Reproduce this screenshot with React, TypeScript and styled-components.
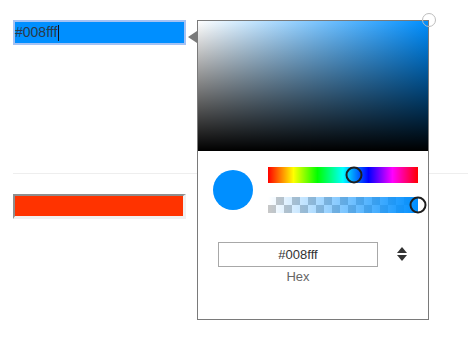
import React from "react";
import styled, { createGlobalStyle } from "styled-components";

const Global = createGlobalStyle`
  html, body { margin: 0; padding: 0; background: #fff; }
  body { font-family: "Liberation Sans", Arial, sans-serif; }
`;

const Page = styled.div`
  padding-top: 20px;
  width: 468px;
  height: 360px;
  box-sizing: border-box;
  overflow: hidden;
`;

const TopRow = styled.div`
  height: 153px;
  padding-left: 13px;
`;

const Anchor = styled.div`
  position: relative;
  width: 173px;
`;

const ColorField = styled.div<{ $bg: string; $focused?: boolean }>`
  box-sizing: border-box;
  width: 173px;
  height: 25px;
  background: ${(p) => p.$bg};
  border: 2px solid;
  border-color: ${(p) => (p.$focused ? "#a4c2f4" : "#8e8e8e #f0f0f0 #f0f0f0 #8e8e8e")};
  ${(p) => (p.$focused ? "" : "border-width: 2px 3px 3px 2px;")}
  font-size: 14px;
  line-height: 21px;
  color: #2a3a4a;
  padding-left: 0;
  display: flex;
  align-items: center;
`;

const Caret = styled.span`
  display: inline-block;
  width: 1px;
  height: 16px;
  background: #111;
  margin-left: 1px;
`;

const Divider = styled.div`
  margin-left: 13px;
  border-top: 1px solid #eeeeee;
`;

const BottomRow = styled.div`
  padding: 20px 0 0 13px;
`;

const Popover = styled.div`
  position: absolute;
  left: 184px;
  top: 0;
  width: 232px;
  height: 300px;
  box-sizing: border-box;
  border: 1px solid #7a7a7a;
  background: #fff;
`;

const Arrow = styled.div`
  position: absolute;
  left: -10px;
  top: 10px;
  width: 0;
  height: 0;
  border-top: 6px solid transparent;
  border-bottom: 6px solid transparent;
  border-right: 9px solid #7a7a7a;
`;

const Saturation = styled.div<{ $hue: string }>`
  position: relative;
  height: 130px;
  background: linear-gradient(to top, #000, rgba(0, 0, 0, 0)),
    linear-gradient(to right, #fff, ${(p) => p.$hue});
`;

const SatPointer = styled.div`
  position: absolute;
  right: -8px;
  top: -8px;
  width: 12px;
  height: 12px;
  border-radius: 50%;
  border: 1.5px solid #bdbdbd;
  background: transparent;
`;

const Body = styled.div`
  padding: 16px 10px 0 15px;
`;

const SliderRow = styled.div`
  display: flex;
  align-items: center;
`;

const Swatch = styled.div<{ $c: string }>`
  width: 40px;
  height: 40px;
  border-radius: 50%;
  background: ${(p) => p.$c};
  flex: none;
`;

const Sliders = styled.div`
  margin-left: 15px;
  display: flex;
  flex-direction: column;
  gap: 14px;
`;

const Track = styled.div`
  position: relative;
  width: 150px;
  height: 16px;
`;

const HueTrack = styled(Track)`
  background: linear-gradient(
    to right,
    #f00 0%,
    #ff0 17%,
    #0f0 33%,
    #0ff 50%,
    #00f 67%,
    #f0f 83%,
    #f00 100%
  );
`;

const AlphaTrack = styled(Track)<{ $c: string }>`
  background: linear-gradient(to right, rgba(0, 143, 255, 0), ${(p) => p.$c}),
    repeating-conic-gradient(#c8c8c8 0% 25%, #ffffff 0% 50%) 0 0 / 16px 16px;
`;

const Thumb = styled.div`
  position: absolute;
  top: 50%;
  width: 13px;
  height: 13px;
  border-radius: 50%;
  border: 2px solid #1e1e1e;
  transform: translate(-50%, -50%);
  box-sizing: content-box;
`;

const HexRow = styled.div`
  margin-top: 29px;
  margin-left: 5px;
  display: flex;
  align-items: flex-start;
`;

const HexField = styled.div`
  display: flex;
  flex-direction: column;
  align-items: center;
`;

const HexInput = styled.div`
  box-sizing: border-box;
  width: 160px;
  height: 25px;
  border: 1px solid #a8a8a8;
  font-size: 13px;
  line-height: 23px;
  text-align: center;
  color: #333;
`;

const HexLabel = styled.div`
  margin-top: 2px;
  font-size: 13px;
  color: #666;
`;

const Toggle = styled.div`
  margin-left: 19px;
  margin-top: 5px;
  display: flex;
  flex-direction: column;
  gap: 2px;
  width: 10px;
  align-items: center;
`;

const Tri = styled.div<{ $up?: boolean }>`
  width: 0;
  height: 0;
  border-left: 5px solid transparent;
  border-right: 5px solid transparent;
  ${(p) => (p.$up ? "border-bottom: 6px solid #333;" : "border-top: 6px solid #333;")}
`;

export default function App() {
  const color = "#008fff";
  const huePct = (206.3 / 360) * 100;
  return (
    <>
      <Global />
      <Page>
        <TopRow>
          <Anchor>
            <ColorField $bg={color} $focused>
              #008fff
              <Caret />
            </ColorField>
            <Popover>
              <Arrow />
              <Saturation $hue={color}>
                <SatPointer />
              </Saturation>
              <Body>
                <SliderRow>
                  <Swatch $c={color} />
                  <Sliders>
                    <HueTrack>
                      <Thumb style={{ left: `${huePct}%` }} />
                    </HueTrack>
                    <AlphaTrack $c={color}>
                      <Thumb style={{ left: "100%" }} />
                    </AlphaTrack>
                  </Sliders>
                </SliderRow>
                <HexRow>
                  <HexField>
                    <HexInput>#008fff</HexInput>
                    <HexLabel>Hex</HexLabel>
                  </HexField>
                  <Toggle>
                    <Tri $up />
                    <Tri />
                  </Toggle>
                </HexRow>
              </Body>
            </Popover>
          </Anchor>
        </TopRow>
        <Divider />
        <BottomRow>
          <ColorField $bg="#ff3300" />
        </BottomRow>
      </Page>
    </>
  );
}
